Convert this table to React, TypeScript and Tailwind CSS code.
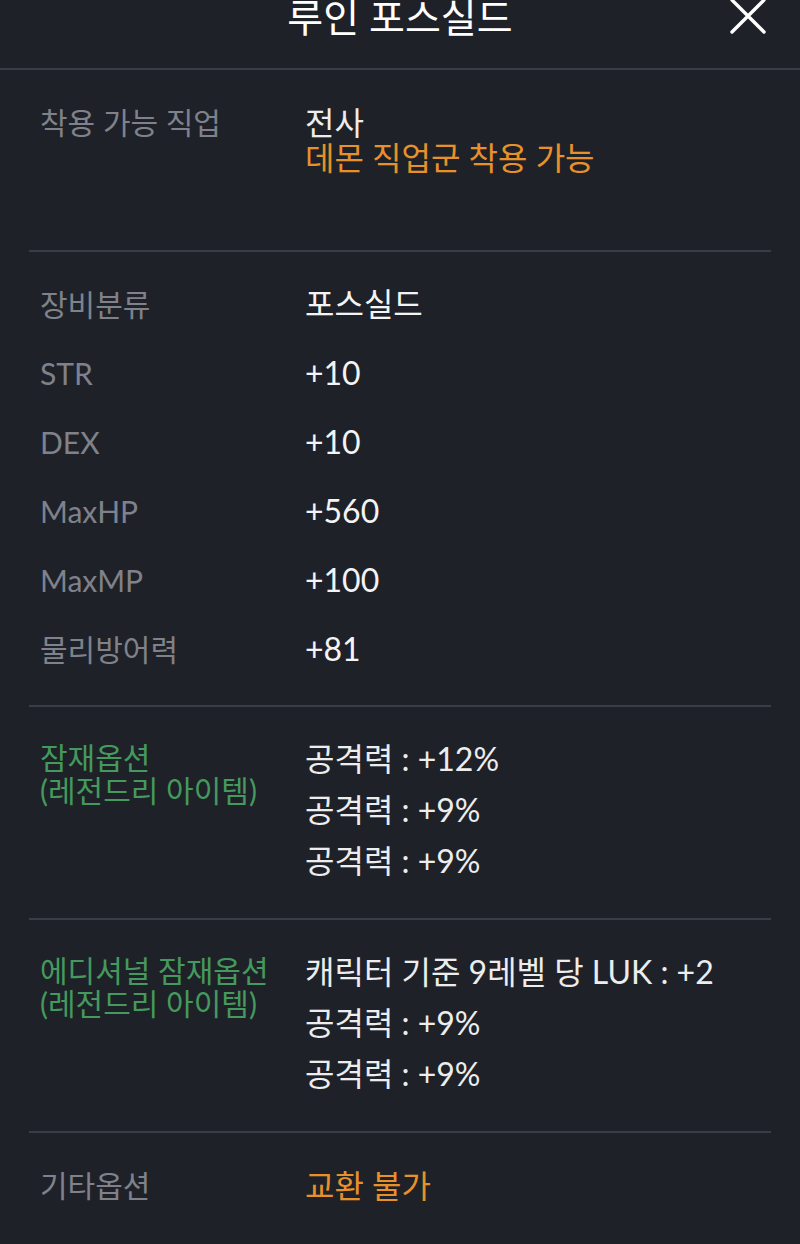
import React from "react";

const FONT = { fontFamily: "Lato, 'Noto Sans CJK KR', sans-serif" };

function Divider() {
  return <div className="mx-[29px] h-[2px] bg-[#3a3d45]" />;
}

function StatRow({ label, value }: { label: string; value: string }) {
  return (
    <div className="grid grid-cols-[265px_1fr] h-[69px] items-center">
      <div className="text-[30px] text-[#7f828a] leading-none whitespace-nowrap">{label}</div>
      <div className="text-[32px] text-[#f4f4f4] leading-none whitespace-nowrap">{value}</div>
    </div>
  );
}

function OptionBlock({
  labels,
  values,
}: {
  labels: string[];
  values: string[];
}) {
  return (
    <div className="grid grid-cols-[265px_1fr] mx-[29px] px-[11px] pt-[26px] pb-[32px]">
      <div className="pt-[8px] text-[30px] leading-[33px] text-[#449a5c]">
        {labels.map((l) => (
          <div key={l} className="whitespace-nowrap">{l}</div>
        ))}
      </div>
      <div className="text-[32px] leading-[51px] text-[#ededed]">
        {values.map((v, i) => (
          <div key={i} className="whitespace-nowrap">{v}</div>
        ))}
      </div>
    </div>
  );
}

export default function App() {
  return (
    <div
      className="w-[800px] h-[1244px] bg-[#1f2129] overflow-hidden flex flex-col"
      style={FONT}
    >
      {/* Header */}
      <div className="h-[68px] grid grid-cols-[1fr_auto_1fr] items-start">
        <div />
        <div className="text-[39px] leading-none text-white mt-[-2px] whitespace-nowrap">
          루인 포스실드
        </div>
        <div className="flex justify-end pr-[34px] mt-[-2px]">
          <svg width="36" height="36" viewBox="0 0 36 36" fill="none">
            <path
              d="M2 2 L34 34 M34 2 L2 34"
              stroke="#ffffff"
              strokeWidth="3.4"
              strokeLinecap="round"
            />
          </svg>
        </div>
      </div>
      <div className="h-[2px] bg-[#3a3d45]" />

      {/* 착용 가능 직업 */}
      <div className="grid grid-cols-[265px_1fr] mx-[29px] px-[11px] pt-[35px] pb-[75px]">
        <div className="text-[30px] leading-[35px] text-[#7f828a] whitespace-nowrap">
          착용 가능 직업
        </div>
        <div className="text-[32px] leading-[35px] whitespace-nowrap">
          <div className="text-[#ededed]">전사</div>
          <div className="text-[#e8912a]">데몬 직업군 착용 가능</div>
        </div>
      </div>
      <Divider />

      {/* Stats */}
      <div className="mx-[29px] px-[11px] pt-[17px] pb-[22px]">
        <StatRow label="장비분류" value="포스실드" />
        <StatRow label="STR" value="+10" />
        <StatRow label="DEX" value="+10" />
        <StatRow label="MaxHP" value="+560" />
        <StatRow label="MaxMP" value="+100" />
        <StatRow label="물리방어력" value="+81" />
      </div>
      <Divider />

      <OptionBlock
        labels={["잠재옵션", "(레전드리 아이템)"]}
        values={["공격력 : +12%", "공격력 : +9%", "공격력 : +9%"]}
      />
      <Divider />

      <OptionBlock
        labels={["에디셔널 잠재옵션", "(레전드리 아이템)"]}
        values={["캐릭터 기준 9레벨 당 LUK : +2", "공격력 : +9%", "공격력 : +9%"]}
      />
      <Divider />

      <div className="grid grid-cols-[265px_1fr] mx-[29px] px-[11px] pt-[27px]">
        <div className="text-[30px] leading-[51px] text-[#7f828a]">기타옵션</div>
        <div className="text-[32px] leading-[51px] text-[#e8912a]">교환 불가</div>
      </div>
    </div>
  );
}
